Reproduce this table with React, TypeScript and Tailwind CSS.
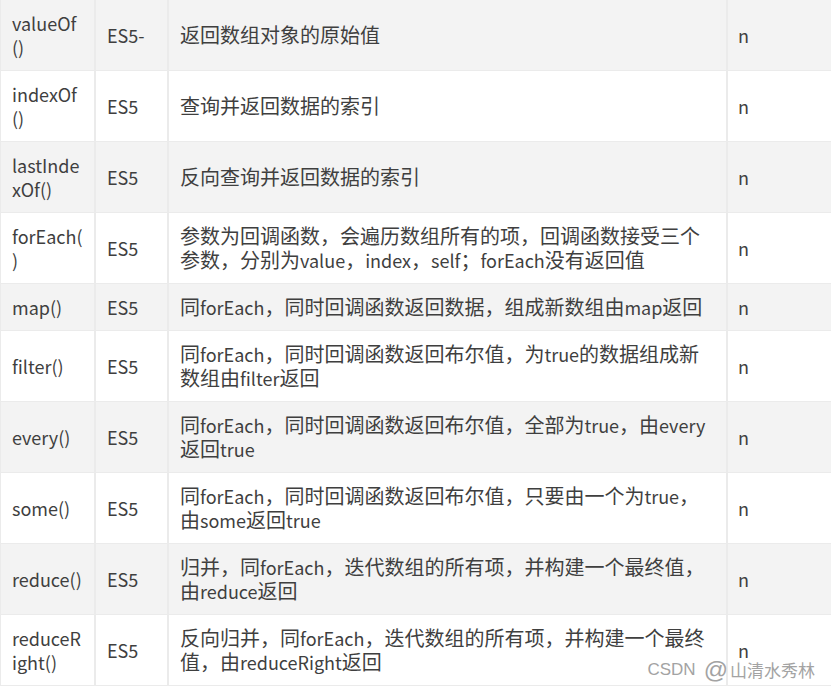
import React from "react";

type Row = { name: string[]; ver: string; desc: string[] };

const rows: Row[] = [
  { name: ["valueOf", "()"], ver: "ES5-", desc: ["返回数组对象的原始值"] },
  { name: ["indexOf", "()"], ver: "ES5", desc: ["查询并返回数据的索引"] },
  { name: ["lastInde", "xOf()"], ver: "ES5", desc: ["反向查询并返回数据的索引"] },
  {
    name: ["forEach(", ")"],
    ver: "ES5",
    desc: ["参数为回调函数，会遍历数组所有的项，回调函数接受三个", "参数，分别为value，index，self；forEach没有返回值"],
  },
  { name: ["map()"], ver: "ES5", desc: ["同forEach，同时回调函数返回数据，组成新数组由map返回"] },
  { name: ["filter()"], ver: "ES5", desc: ["同forEach，同时回调函数返回布尔值，为true的数据组成新", "数组由filter返回"] },
  { name: ["every()"], ver: "ES5", desc: ["同forEach，同时回调函数返回布尔值，全部为true，由every", "返回true"] },
  { name: ["some()"], ver: "ES5", desc: ["同forEach，同时回调函数返回布尔值，只要由一个为true，", "由some返回true"] },
  { name: ["reduce()"], ver: "ES5", desc: ["归并，同forEach，迭代数组的所有项，并构建一个最终值，", "由reduce返回"] },
  { name: ["reduceR", "ight()"], ver: "ES5", desc: ["反向归并，同forEach，迭代数组的所有项，并构建一个最终", "值，由reduceRight返回"] },
];

function Mixed({ text }: { text: string }) {
  const parts = text.split(/([\x00-\x7F]+)/).filter((p) => p.length > 0);
  return (
    <>
      {parts.map((p, i) =>
        /^[\x00-\x7F]+$/.test(p) ? (
          <span key={i} className="text-[18px]">
            {p}
          </span>
        ) : (
          <span key={i}>{p}</span>
        )
      )}
    </>
  );
}

function Lines({ lines }: { lines: string[] }) {
  return (
    <div>
      {lines.map((l, i) => (
        <div key={i} className="whitespace-nowrap h-[24px]">
          <Mixed text={l} />
        </div>
      ))}
    </div>
  );
}

export default function App() {
  return (
    <div
      className="relative w-[831px] h-[689px] overflow-hidden bg-white text-[#3f3f3f] text-[20px] leading-[24px]"
      style={{ fontFamily: '"Noto Sans CJK SC", "Noto Sans", sans-serif' }}
    >
      <div className="flex flex-col">
        {rows.map((r, i) => (
          <div
            key={i}
            className={`grid grid-cols-[96px_73px_559px_1fr] border-b border-[#ebebeb] ${
              i % 2 === 0 ? "bg-[#f3f3f3]" : "bg-white"
            }`}
          >
            <div className="flex items-center border-r-2 border-l border-[#ebebeb] pl-[11px] pr-[6px] py-[11px]">
              <Lines lines={r.name} />
            </div>
            <div className="flex items-center border-r-2 border-[#ebebeb] pl-[11px] py-[11px]">
              <Lines lines={[r.ver]} />
            </div>
            <div className="flex items-center border-r-2 border-[#ebebeb] pl-[11px] py-[11px]">
              <Lines lines={r.desc} />
            </div>
            <div className="flex items-center pl-[10px] py-[11px]">
              <Lines lines={["n"]} />
            </div>
          </div>
        ))}
      </div>
      <div
        className="absolute right-[16px] bottom-[9px] flex items-center text-[17px] leading-[20px] text-[#a3a3a3] whitespace-nowrap"
        style={{ fontFamily: '"Liberation Sans", "Noto Sans CJK SC", sans-serif' }}
      >
        <span>CSDN</span>
        <span className="ml-[8px] mr-[2px] text-[24px]">@</span>
        <span className="text-[17px]" style={{ fontFamily: '"Noto Sans CJK SC", sans-serif' }}>
          山清水秀林
        </span>
      </div>
    </div>
  );
}
